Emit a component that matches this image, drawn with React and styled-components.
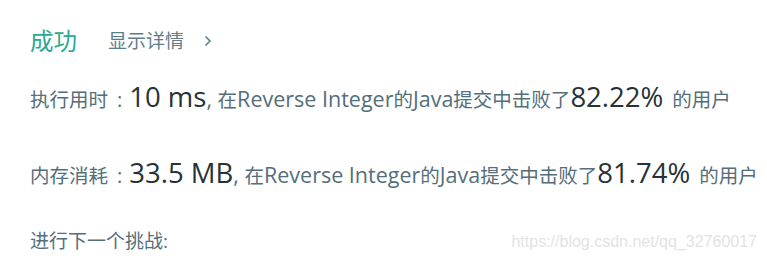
import React from "react";
import styled, { createGlobalStyle } from "styled-components";

const Global = createGlobalStyle`
  html, body { margin: 0; padding: 0; background: #fff; }
  body { font-family: "Open Sans", "Noto Sans CJK SC", sans-serif; }
`;

const Page = styled.div`
  position: relative;
  width: 767px;
  height: 259px;
  box-sizing: border-box;
  padding: 28px 0 0 30px;
  overflow: hidden;
`;

const Header = styled.div`
  display: flex;
  align-items: center;
  height: 26px;
`;

const Status = styled.span`
  font-size: 23.5px;
  line-height: 26px;
  color: #2aa893;
`;

const Details = styled.span`
  display: inline-flex;
  align-items: center;
  margin-left: 31px;
  font-size: 19px;
  line-height: 26px;
  color: #607d8b;
`;

const Chevron = styled.svg`
  margin-left: 20px;
  width: 8px;
  height: 12px;
`;

const Stat = styled.div`
  margin-top: ${(p) => p.$top}px;
  font-size: 19.5px;
  line-height: 36px;
  color: #546e7a;
  white-space: nowrap;
`;

const Sep = styled.span`
  font-size: 20px;
  padding: 0 7px 0 9px;
`;

const Latin = styled.span`
  font-size: 21.5px;
`;

const Big = styled.span`
  font-size: 27.5px;
  color: #263238;
  margin-right: ${(p) => (p.$gap ? 4 : 0)}px;
`;

const Next = styled.div`
  margin-top: 35px;
  font-size: 19px;
  line-height: 24px;
  color: #546e7a;
`;

const Watermark = styled.div`
  position: absolute;
  right: 10px;
  bottom: 8px;
  font-family: "Liberation Sans", Arial, sans-serif;
  font-size: 16px;
  color: #e3e3e3;
`;

function StatLine({ top, label, value, problem, lang, percent }) {
  return (
    <Stat $top={top}>
      {label}
      <Sep>:</Sep>
      <Big>{value}</Big>
      <Latin>, </Latin>在<Latin>{problem}</Latin>的<Latin>{lang}</Latin>提交中击败了
      <Big $gap>{percent}</Big> 的用户
    </Stat>
  );
}

export default function App() {
  return (
    <>
      <Global />
      <Page>
        <Header>
          <Status>成功</Status>
          <Details>
            显示详情
            <Chevron viewBox="0 0 8 12">
              <polyline points="1.5,1.5 6,6 1.5,10.5" fill="none" stroke="#607d8b" strokeWidth="1.6" />
            </Chevron>
          </Details>
        </Header>
        <StatLine top={25} label="执行用时" value="10 ms" problem="Reverse Integer" lang="Java" percent="82.22%" />
        <StatLine top={37} label="内存消耗" value="33.5 MB" problem="Reverse Integer" lang="Java" percent="81.74%" />
        <Next>进行下一个挑战:</Next>
        <Watermark>https://blog.csdn.net/qq_32760017</Watermark>
      </Page>
    </>
  );
}
